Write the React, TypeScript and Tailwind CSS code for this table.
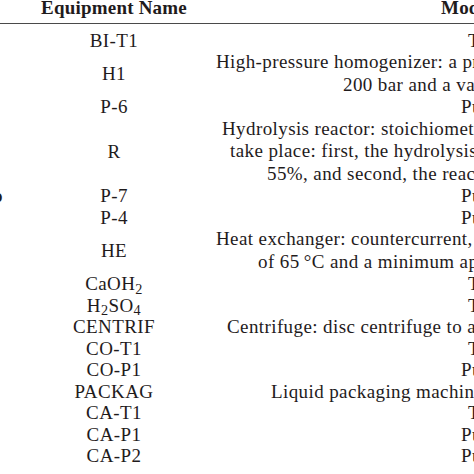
import React from "react";

type Line = { t: React.ReactNode; ml: string };
type Row = { name: React.ReactNode; lines: Line[]; extra?: boolean };

const rows: Row[] = [
  { name: "BI-T1", lines: [{ t: "Tank", ml: "ml-[258px]" }] },
  {
    name: "H1",
    lines: [
      { t: "High-pressure homogenizer: a pressure of", ml: "ml-[6px]" },
      { t: "200 bar and a valve", ml: "ml-[133px]" },
    ],
  },
  { name: "P-6", lines: [{ t: "Pump", ml: "ml-[251px]" }] },
  {
    name: "R",
    lines: [
      { t: "Hydrolysis reactor: stoichiometric reactions", ml: "ml-[12px]" },
      { t: "take place: first, the hydrolysis of", ml: "ml-[20px]" },
      { t: "55%, and second, the reaction", ml: "ml-[57px]" },
    ],
  },
  { name: "P-7", lines: [{ t: "Pump", ml: "ml-[251px]" }], extra: true },
  { name: "P-4", lines: [{ t: "Pump", ml: "ml-[251px]" }] },
  {
    name: "HE",
    lines: [
      { t: "Heat exchanger: countercurrent, with", ml: "ml-[6px]" },
      { t: "of 65\u2009°C and a minimum approach", ml: "ml-[48px]" },
    ],
  },
  {
    name: (
      <>
        CaOH<sub>2</sub>
      </>
    ),
    lines: [{ t: "Tank", ml: "ml-[258px]" }],
  },
  {
    name: (
      <>
        H<sub>2</sub>SO<sub>4</sub>
      </>
    ),
    lines: [{ t: "Tank", ml: "ml-[258px]" }],
  },
  { name: "CENTRIF", lines: [{ t: "Centrifuge: disc centrifuge to a", ml: "ml-[17px]" }] },
  { name: "CO-T1", lines: [{ t: "Tank", ml: "ml-[258px]" }] },
  { name: "CO-P1", lines: [{ t: "Pump", ml: "ml-[251px]" }] },
  { name: "PACKAG", lines: [{ t: "Liquid packaging machine", ml: "ml-[61px]" }] },
  { name: "CA-T1", lines: [{ t: "Tank", ml: "ml-[258px]" }] },
  { name: "CA-P1", lines: [{ t: "Pump", ml: "ml-[251px]" }] },
  { name: "CA-P2", lines: [{ t: "Pump", ml: "ml-[251px]" }] },
];

export default function App() {
  return (
    <div
      className="relative w-[474px] h-[474px] overflow-hidden bg-white text-[#1f1b1c] text-[19px] tracking-[0.4px] leading-[21.5px]"
      style={{ fontFamily: '"Liberation Serif", "Times New Roman", serif' }}
    >
      <div className="-mt-[3px]">
        <div className="grid grid-cols-[210px_1fr] font-bold tracking-[0.2px]">
          <div className="pl-[18px] text-center whitespace-nowrap">Equipment Name</div>
          <div className="ml-[231px] whitespace-nowrap overflow-hidden">Model Description</div>
        </div>
        <div className="mt-[4px] h-[1px] bg-[#4a4a4a]" />
        <div className="pt-[6px]">
          {rows.map((r, i) => (
            <div key={i} className="relative grid grid-cols-[210px_1fr]">
              {r.extra ? (
                <span className="absolute left-[-7px] top-0 font-bold">o</span>
              ) : null}
              <div className="pl-[18px] flex items-center justify-center whitespace-nowrap">
                <span>{r.name}</span>
              </div>
              <div
                className={`min-w-0 overflow-hidden ${
                  r.lines.length > 1 ? "leading-[22.5px]" : ""
                }`}
              >
                {r.lines.map((l, j) => (
                  <div key={j} className={`whitespace-nowrap ${l.ml}`}>
                    {l.t}
                  </div>
                ))}
              </div>
            </div>
          ))}
        </div>
      </div>
    </div>
  );
}
